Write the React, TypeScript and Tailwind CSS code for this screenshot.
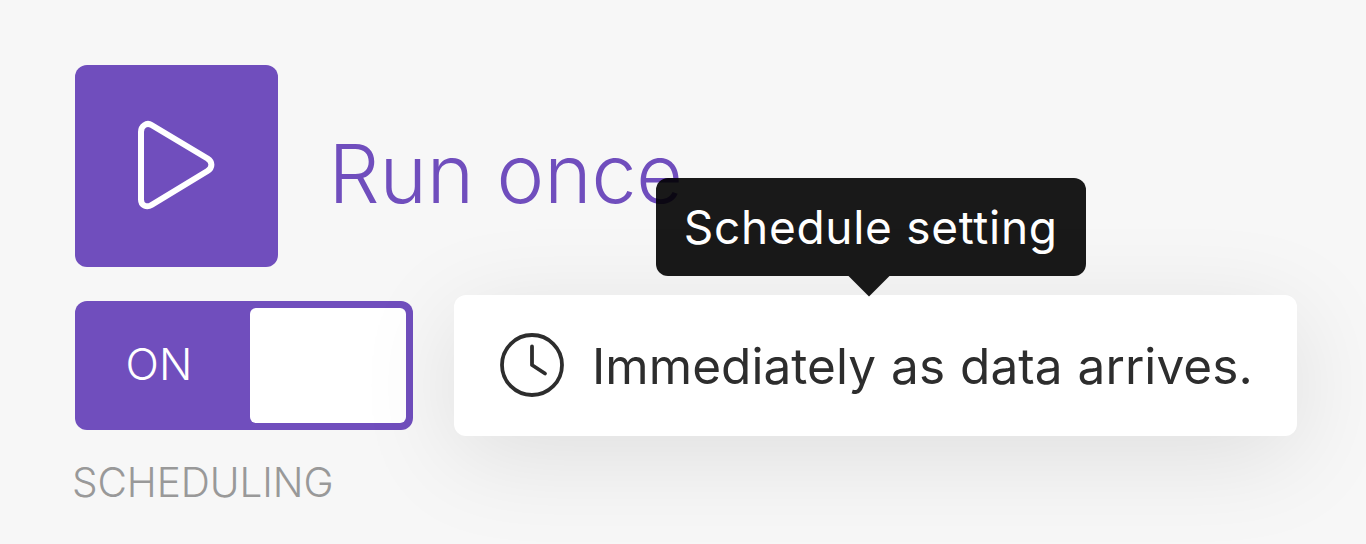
import { useState } from "react";

const PlayIcon = () => (
  <svg width="80" height="92" viewBox="0 0 80 92" fill="none">
    <path
      d="M5 12v67.500c0 6 5.600 8.500 10.500 5.500l56-34c5.200-3.200 5.200-9.200 0-12.500l-56-33.500C10.600 2 5 6 5 12z"
      stroke="white"
      strokeWidth="6"
      strokeLinejoin="round"
    />
  </svg>
);

const ClockIcon = () => (
  <svg width="66" height="66" viewBox="0 0 66 66" fill="none" className="shrink-0">
    <circle cx="33" cy="33" r="30" stroke="#2d2d2d" strokeWidth="3.800" />
    <path
      d="M33 14.500v18.500l13 8.500"
      stroke="#2d2d2d"
      strokeWidth="3.800"
      strokeLinecap="round"
      strokeLinejoin="round"
    />
  </svg>
);

const Tooltip = ({ text }: { text: string }) => (
  <div className="absolute left-[202px] top-[-116.5px] flex h-[97.5px] w-[429.5px] items-start justify-center rounded-[12px] bg-black/90 pt-[25.500px]">
    <span className="whitespace-nowrap text-[46px] leading-none tracking-[0.7px] text-white">
      {text}
    </span>
    <svg
      width="42"
      height="21"
      viewBox="0 0 42 21"
      className="absolute left-[192px] top-full"
    >
      <path d="M0.500 0h41L21 20.500z" fill="black" fillOpacity="0.9" />
    </svg>
  </div>
);

const App: React.FC = () => {
  const [isOn, setIsOn] = useState<boolean>(true);

  return (
    <main className="h-[544px] w-full overflow-hidden bg-[#f7f7f7] pl-[75px] pt-[65px] font-['Inter',sans-serif]">
      <div className="flex h-[202px] items-start">
        <button className="flex h-[202px] w-[202.5px] items-center justify-center rounded-[12px] bg-[#704ebd]">
          <PlayIcon />
        </button>
        <span className="ml-[51px] mt-[69px] whitespace-nowrap text-[80.5px] font-light leading-none tracking-[-0.1px] text-[#704ebd]">
          Run once
        </span>
      </div>

      <div className="flex items-start pt-[27.500px]">
        <div className="mt-[6.500px] w-[338px]">
          <button
            onClick={() => setIsOn((prev) => !prev)}
            className={
              isOn
                ? "flex h-[128.5px] w-full items-start justify-between rounded-[12px] bg-[#704ebd] p-[6.500px] pr-[7px]"
                : "flex h-[128.5px] w-full flex-row-reverse items-start justify-between rounded-[12px] bg-[#9b9b9b] p-[6.500px]"
            }
          >
            <span className="ml-[44px] mt-[34.500px] text-[44px] font-light leading-none text-white">
              {isOn ? "ON" : "OFF"}
            </span>
            <span className="h-[115px] w-[156px] rounded-[6px] bg-white" />
          </button>
          <div className="mt-[33.500px] whitespace-nowrap text-[40.5px] font-light leading-none tracking-[-0.1px] text-[#999999]">
            <span className="-ml-[3px]">SCHEDULING</span>
          </div>
        </div>

        <div className="relative ml-[41px] flex h-[141.5px] w-[843px] items-start rounded-[12px] bg-white pl-[45px] pt-[37.500px] shadow-[0_20px_100px_rgba(0,0,0,0.1)]">
          <ClockIcon />
          <span className="ml-[27px] mt-[10px] whitespace-nowrap text-[49.5px] leading-none tracking-[0.05px] text-[#2d2d2d] [word-spacing:1px]">
            Immediately as data arrives.
          </span>
          <Tooltip text="Schedule setting" />
        </div>
      </div>
    </main>
  );
};

export default App;
